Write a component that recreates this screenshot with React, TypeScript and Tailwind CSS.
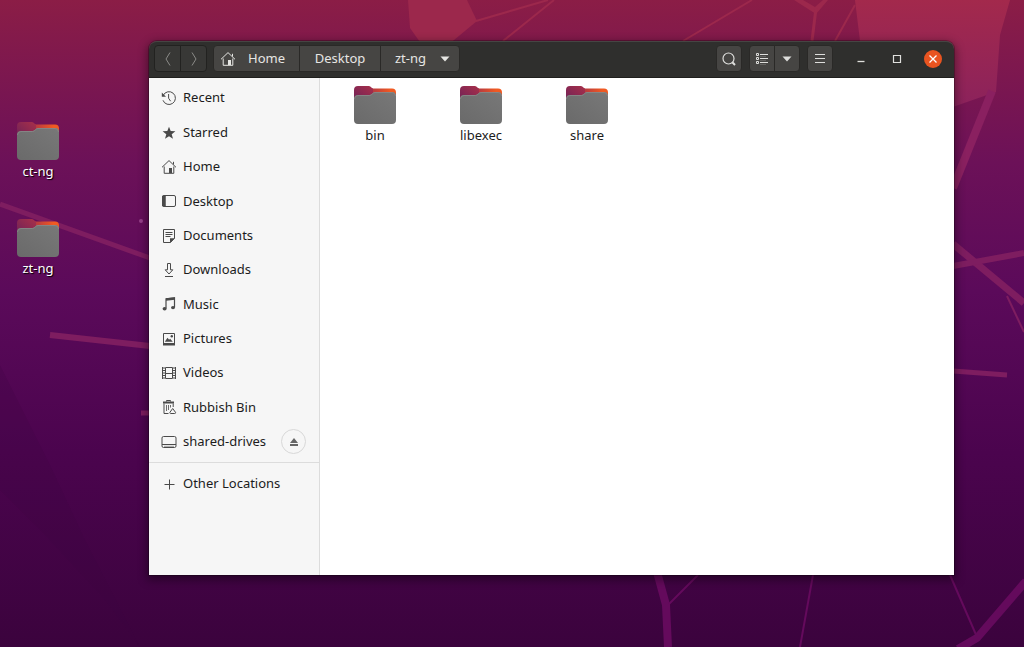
import React from "react";

interface Place {
  name: string;
  icon: React.ReactNode;
  ejectable?: boolean;
}

const Icon: React.FC<{ children: React.ReactNode }> = ({ children }) => (
  <svg
    width="16"
    height="16"
    viewBox="0 0 16 16"
    fill="none"
    stroke="currentColor"
    className="shrink-0"
    aria-hidden="true"
  >
    {children}
  </svg>
);

const HomeIcon = () => (
  <Icon>
    <path d="M1 8.3 8 1.6l7 6.7M12.5 5.5V2.8" />
    <path d="M3.2 7.5v6.8h9.6V7.5" />
    <path d="M8 9h3v5H8z" fill="currentColor" stroke="none" />
  </Icon>
);

const places: Place[] = [
  {
    name: "Recent",
    icon: (
      <Icon>
        <path d="M2.3 5.2A6.4 6.4 0 1 1 2 10.3" />
        <path d="M7.6 4v4.2l2 3" />
        <path d="M.8 2.5v4.2H5z" fill="currentColor" stroke="none" />
      </Icon>
    ),
  },
  {
    name: "Starred",
    icon: (
      <Icon>
        <path
          d="M8 1.8l1.7 4.3 4.7.2-3.7 2.9 1.3 4.6L8 11.2l-4 2.6 1.3-4.6-3.7-2.9 4.7-.2z"
          fill="currentColor"
          stroke="none"
        />
      </Icon>
    ),
  },
  { name: "Home", icon: <HomeIcon /> },
  {
    name: "Desktop",
    icon: (
      <Icon>
        <rect x="1.5" y="2.5" width="13" height="11" rx="1.5" />
        <path d="M1.500 3h2.700v10H1.500z" fill="currentColor" />
      </Icon>
    ),
  },
  {
    name: "Documents",
    icon: (
      <Icon>
        <path d="M2.5 1.5h11v8.7l-4 4.3h-7z" />
        <path d="M4.5 4.5h7M4.5 6.5h7M4.5 8.5h5" />
        <path d="M9 14.8v-4.6h5z" fill="currentColor" stroke="none" />
      </Icon>
    ),
  },
  {
    name: "Downloads",
    icon: (
      <Icon>
        <path d="M6.5 1.5h3v6.3h2.3L8 12 4.2 7.8h2.3z" />
        <path d="M4 14.5h8" />
      </Icon>
    ),
  },
  {
    name: "Music",
    icon: (
      <Icon>
        <path d="M5 12.5V2.8l8.5-1v9.7" strokeWidth="1.2" />
        <path d="M5 2.3l9-1v2.5L5 4.8z" fill="currentColor" stroke="none" />
        <ellipse cx="3.6" cy="12.7" rx="2" ry="1.7" fill="currentColor" stroke="none" />
        <ellipse cx="12" cy="11.6" rx="2" ry="1.7" fill="currentColor" stroke="none" />
      </Icon>
    ),
  },
  {
    name: "Pictures",
    icon: (
      <Icon>
        <path d="M2.5 2.5h11v10h-11z" />
        <path d="M2 12h12v2.5H2z" fill="currentColor" stroke="none" />
        <path
          d="M3.8 10.8 6.5 6.8l1.6 2 1-1 2.7 3z"
          fill="currentColor"
          stroke="none"
        />
        <circle cx="10.8" cy="5.2" r="1.2" fill="currentColor" stroke="none" />
      </Icon>
    ),
  },
  {
    name: "Videos",
    icon: (
      <Icon>
        <path d="M4.5 2.5h7v11h-7zM4.5 8.5h7" />
        <path d="M1.5 2v12M14.5 2v12" />
        <path d="M3 2.5v11.500M13 2.5v11.500" strokeDasharray="1 1.5" strokeWidth="2" />
      </Icon>
    ),
  },
  {
    name: "Rubbish Bin",
    icon: (
      <Icon>
        <path d="M2 3.5h11" strokeWidth="2" />
        <path d="M5.5 2.5v-1h4v1" />
        <path d="M3 4.5v10h4.5M12.2 4.5v3.500" />
        <path d="M5.5 6v6M7.500 6v5M9.500 6v2.500" strokeOpacity="0.8" />
        <path d="M11.700 9.500 9 13.200c-.5.900 0 1.300.700 1.300h4c.8 0 1.200-.5.700-1.300z" />
      </Icon>
    ),
  },
  {
    name: "shared-drives",
    icon: (
      <Icon>
        <rect x="1" y="2.500" width="14" height="11" rx="1.500" />
        <path d="M1 10.500h14" />
        <path d="M3 12.300h10" strokeOpacity="0.5" />
      </Icon>
    ),
    ejectable: true,
  },
];

const files = ["bin", "libexec", "share"];
const desktopItems = ["ct-ng", "zt-ng"];

const FolderIcon = () => (
  <svg width="42" height="38" viewBox="0 0 42 38" aria-hidden="true">
    <defs>
      <linearGradient id="folder-tab" x1="0" y1="1" x2="1" y2="0">
        <stop offset="0" stopColor="#6d2158" />
        <stop offset="1" stopColor="#a8304a" />
      </linearGradient>
      <linearGradient id="folder-back" x1="0" y1="0" x2="1" y2="0">
        <stop offset="0.1" stopColor="#b13744" />
        <stop offset="0.8" stopColor="#f05a22" />
      </linearGradient>
      <linearGradient id="folder-front" x1="0" y1="1" x2="1" y2="0">
        <stop offset="0" stopColor="#6a6a6a" />
        <stop offset="1" stopColor="#787878" />
      </linearGradient>
    </defs>
    <path d="M14 2.500h24a4 4 0 0 1 4 4V17H14z" fill="url(#folder-back)" />
    <path d="M0 16V4a4 4 0 0 1 4-4h11c2 0 2.500 2.500 4 2.500V8l-4 8z" fill="url(#folder-tab)" />
    <path
      d="M0 13a4 4 0 0 1 4-4h11.500c2.500 0 3-3 5.500-3h17a4 4 0 0 1 4 4v24a4 4 0 0 1-4 4H4a4 4 0 0 1-4-4z"
      fill="url(#folder-front)"
    />
    <path
      d="M.5 13A3.500 3.500 0 0 1 4 9.500h11.500c2.500 0 3-3 5.500-3h17a3.500 3.500 0 0 1 3.500 3.500"
      fill="none"
      stroke="#8a8a8a"
      strokeOpacity="0.8"
    />
  </svg>
);

const CaretIcon = () => (
  <svg width="10" height="6" viewBox="0 0 10 6" aria-hidden="true">
    <path d="M.5.500h9L5 5.500z" fill="currentColor" />
  </svg>
);

const Wallpaper = () => (
  <svg
    className="absolute inset-0 h-full w-full"
    viewBox="0 0 1024 647"
    preserveAspectRatio="xMidYMid slice"
    fill="none"
    aria-hidden="true"
  >
    <defs>
      <linearGradient id="sky" x1="0" y1="0" x2="0" y2="1">
        <stop offset="0" stopColor="#8b1d46" />
        <stop offset="0.1" stopColor="#7e184e" />
        <stop offset="0.25" stopColor="#6c1158" />
        <stop offset="0.45" stopColor="#5b0a5a" />
        <stop offset="0.7" stopColor="#4b044e" />
        <stop offset="1" stopColor="#3b033d" />
      </linearGradient>
      <linearGradient id="shape" x1="0" y1="0" x2="0" y2="1">
        <stop offset="0" stopColor="#a3294c" />
        <stop offset="1" stopColor="#8b225c" />
      </linearGradient>
    </defs>
    <rect width="1024" height="647" fill="url(#sky)" />
    <path d="M0 365 50 465 85 540 140 647 105 600 45 535 0 490z" fill="#3a0340" opacity="0.2" />
    <path d="M408 0h59l10 21-29 24h-26l-12-17z" fill="#9c284c" />
    <path d="M855 0h155l-10 35-4 57-9 3-40 14-86-60z" fill="url(#shape)" />
    <path d="M794 0l22 14 12-14h-5l-8 7-12-7z" fill="#9c284c" />
    <g stroke="#9c284c" strokeWidth="2">
      <path d="M476 21 548 0M503 41 554 0M683 41 752 0M855 5 835 41" />
      <path d="M816 8 812 41" strokeWidth="3" />
    </g>
    <g stroke="#7e1d60">
      <path d="M992 91 953 188" strokeWidth="8" stroke="#8a2060" />
      <path d="M953 244 1024 303" strokeWidth="7" />
      <path d="M953 266 1024 253" strokeWidth="6" />
      <path d="M1007 296 1024 332" strokeWidth="2" />
      <path d="M953 371 1007 375" strokeWidth="5" />
      <path d="M0 204 150 258" strokeWidth="5" />
      <path d="M50 335 150 346" strokeWidth="6" />
      <path d="M141 413h10" strokeWidth="5" />
    </g>
    <circle cx="141" cy="221" r="2" fill="#96408a" />
    <g stroke="#640a5c">
      <path d="M657 572 666 605 668 647" strokeWidth="8" />
      <path d="M698 575 669 604M813 575 800 647M950 575 977 637" strokeWidth="2" />
      <path d="M1026 581 977 638 958 649" strokeWidth="8" />
    </g>
  </svg>
);

const FolderItem: React.FC<{ name: string; className: string }> = ({ name, className }) => (
  <button
    type="button"
    className={`flex flex-col items-center gap-[3px] text-[13px] leading-4 ${className}`}
  >
    <FolderIcon />
    <span>{name}</span>
  </button>
);

const toolButton =
  "flex h-[27px] w-[26px] items-center justify-center border border-[#2a2927] bg-[#464543] text-[#dededc]";

const pathButton =
  "flex h-[27px] items-center border border-[#2a2927] bg-[#464543] text-[#e6e6e3]";

const navButton =
  "flex h-[27px] w-[27px] items-center justify-center border border-[#222220] bg-[#383836] text-[#8b8b88]";

const windowButton = "flex h-[18px] w-[18px] items-center justify-center rounded-full";

const HeaderBar = () => (
  <header className="flex h-[37px] items-center rounded-t-lg border-t border-b border-t-[#464543] border-b-[#1f1f1d] bg-[#2f2f2d] pr-3 pb-[2px] pl-[5px] text-[13px]">
    <div className="flex -space-x-px">
      <button type="button" aria-label="Back" className={`${navButton} rounded-l`}>
        <Icon>
          <path d="M10 1.500 6 8l4 6.500" />
        </Icon>
      </button>
      <button type="button" aria-label="Forward" className={`${navButton} rounded-r`}>
        <Icon>
          <path d="M6 1.500 10 8l-4 6.500" />
        </Icon>
      </button>
    </div>

    <nav aria-label="Path" className="ml-[6px] flex -space-x-px">
      <button type="button" className={`${pathButton} w-[87px] gap-3 rounded-l pl-[6px]`}>
        <HomeIcon />
        Home
      </button>
      <button type="button" className={`${pathButton} w-[82px] justify-center`}>
        Desktop
      </button>
      <button type="button" className={`${pathButton} w-[80px] justify-end gap-[14px] rounded-r pr-[9px]`}>
        zt-ng
        <CaretIcon />
      </button>
    </nav>

    <div className="ml-auto flex items-center gap-[7px]">
      <button type="button" aria-label="Search" className={`${toolButton} rounded`}>
        <Icon>
          <circle cx="7.500" cy="7.500" r="5.500" strokeWidth="1.200" />
          <path d="M11.300 11.300 14 14" strokeWidth="2" />
        </Icon>
      </button>
      <div className="flex -space-x-px">
        <button type="button" aria-label="List view" className={`${toolButton} rounded-l`}>
          <Icon>
            <path d="M6 3.500h8M6 7.500h8M6 11.500h8" strokeWidth="1.200" />
            <path d="M6 5.500h6M6 9.500h6M6 13.500h6" strokeOpacity="0.2" />
            <path d="M2.500 2.500h2v2h-2zM2.500 6.500h2v2h-2zM2.500 10.500h2v2h-2z" />
          </Icon>
        </button>
        <button type="button" aria-label="View options" className={`${toolButton} rounded-r`}>
          <CaretIcon />
        </button>
      </div>
      <button type="button" aria-label="Menu" className={`${toolButton} rounded`}>
        <Icon>
          <path d="M3 3.500h10M3 7.500h10M3 11.500h10" />
        </Icon>
      </button>
    </div>

    <div className="ml-[19px] flex items-center gap-[18px] text-[#e0e0dd]">
      <button type="button" aria-label="Minimise" className={windowButton}>
        <Icon>
          <path d="M4.500 10.500h7" strokeWidth="1.300" />
        </Icon>
      </button>
      <button type="button" aria-label="Maximise" className={windowButton}>
        <Icon>
          <path d="M4.500 4.500h7v7h-7z" strokeWidth="1.200" />
        </Icon>
      </button>
      <button
        type="button"
        aria-label="Close"
        className={`${windowButton} bg-[#e95420] text-white`}
      >
        <Icon>
          <path d="M4.500 4.500l7 7M11.500 4.500l-7 7" strokeWidth="1.300" />
        </Icon>
      </button>
    </div>
  </header>
);

const Sidebar = () => (
  <aside className="w-[171px] shrink-0 border-r border-[#dcdcdc] bg-[#f6f6f6] pt-[3px] text-[13px] text-[#1c1c1c]">
    <ul className="grid min-h-[378px] auto-rows-fr">
      {places.map((place) => (
        <li key={place.name} className="flex items-center justify-between pr-[13px] pl-3">
          <a href="#" className="flex items-center gap-[6px]">
            <span className="text-[#4a4a4a]">{place.icon}</span>
            {place.name}
          </a>
          {place.ejectable && (
            <button
              type="button"
              aria-label="Eject"
              className="flex h-[25px] w-[25px] items-center justify-center rounded-full border border-[#d8d8d8] text-[#666666]"
            >
              <svg width="8" height="8" viewBox="0 0 8 8" fill="currentColor" aria-hidden="true">
                <path d="M4 0l4 5H0zM0 6h8v2H0z" />
              </svg>
            </button>
          )}
        </li>
      ))}
    </ul>
    <div className="mt-[3px] border-t border-[#dcdcdc] pt-1">
      <a href="#" className="flex h-[34px] items-center gap-[6px] pl-3">
        <span className="text-[#4a4a4a]">
          <Icon>
            <path d="M8.500 3.500v10M3.500 8.500h10" />
          </Icon>
        </span>
        Other Locations
      </a>
    </div>
  </aside>
);

export default function App() {
  return (
    <div className="relative flex min-h-screen overflow-hidden bg-[#4b044e] font-['Noto_Sans','Open_Sans',sans-serif]">
      <Wallpaper />

      <section aria-label="Desktop" className="relative w-[149px] shrink-0 pt-[122px]">
        <div className="flex w-[76px] flex-col gap-10">
          {desktopItems.map((name) => (
            <FolderItem
              key={name}
              name={name}
              className="text-white [text-shadow:1px_1px_1px_#000000]"
            />
          ))}
        </div>
      </section>

      <main className="relative mt-[41px] mr-[70px] mb-[72px] flex min-w-0 flex-1 flex-col rounded-t-lg shadow-[0_3px_10px_2px_rgba(0,0,0,0.4),0_0_0_1px_rgba(0,0,0,0.25)]">
        <HeaderBar />
        <div className="flex flex-1 bg-white">
          <Sidebar />
          <div className="flex flex-1 flex-wrap content-start pt-2 pl-[2px]">
            {files.map((name) => (
              <FolderItem key={name} name={name} className="w-[106px] text-[#1c1c1c]" />
            ))}
          </div>
        </div>
      </main>
    </div>
  );
}
